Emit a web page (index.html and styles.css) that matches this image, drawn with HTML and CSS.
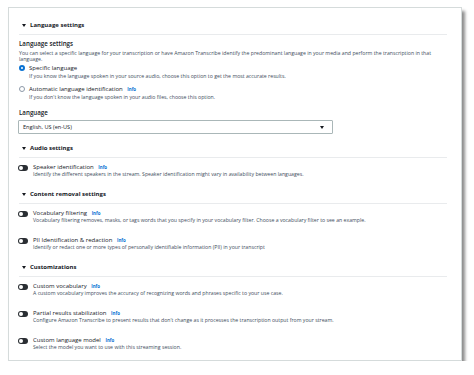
FILE: index.html
```html
<!DOCTYPE html>
<html lang="en">
<head>
    <meta charset="UTF-8">
    <meta name="viewport" content="width=device-width, initial-scale=1.0">
    <title>Streaming settings</title>
    <link rel="stylesheet" href="styles.css">
</head>
<body>
    <div class="panel">
        <div class="section-header top"><span class="caret"></span>Language settings</div>

        <div class="field-label">Language settings</div>
        <p class="field-desc">You can select a specific language for your transcription or have Amazon Transcribe identify the predominant language in your media and perform the transcription in that language.</p>

        <div class="radio-row first">
            <span class="radio checked"></span>
            <div>
                <div class="option-label">Specific language</div>
                <div class="option-desc">If you know the language spoken in your source audio, choose this option to get the most accurate results.</div>
            </div>
        </div>
        <div class="radio-row">
            <span class="radio"></span>
            <div>
                <div class="option-label">Automatic language identification <a class="info">Info</a></div>
                <div class="option-desc">If you don't know the language spoken in your audio files, choose this option.</div>
            </div>
        </div>

        <div class="field-label lang-label">Language</div>
        <div class="select">
            <span>English, US (en-US)</span>
            <span class="select-arrow"></span>
        </div>

        <div class="section-header audio"><span class="caret"></span>Audio settings</div>
        <div class="toggle-row">
            <span class="toggle"></span>
            <div>
                <div class="toggle-label">Speaker identification <a class="info">Info</a></div>
                <div class="toggle-desc">Identify the different speakers in the stream. Speaker identification might vary in availability between languages.</div>
            </div>
        </div>

        <div class="section-header"><span class="caret"></span>Content removal settings</div>
        <div class="toggle-row">
            <span class="toggle"></span>
            <div>
                <div class="toggle-label">Vocabulary filtering <a class="info">Info</a></div>
                <div class="toggle-desc">Vocabulary filtering removes, masks, or tags words that you specify in your vocabulary filter. Choose a vocabulary filter to see an example.</div>
            </div>
        </div>
        <div class="toggle-row">
            <span class="toggle"></span>
            <div>
                <div class="toggle-label">PII Identification &amp; redaction <a class="info">Info</a></div>
                <div class="toggle-desc">Identify or redact one or more types of personally identifiable information (PII) in your transcript</div>
            </div>
        </div>

        <div class="section-header"><span class="caret"></span>Customizations</div>
        <div class="toggle-row">
            <span class="toggle"></span>
            <div>
                <div class="toggle-label">Custom vocabulary <a class="info">Info</a></div>
                <div class="toggle-desc">A custom vocabulary improves the accuracy of recognizing words and phrases specific to your use case.</div>
            </div>
        </div>
        <div class="toggle-row">
            <span class="toggle"></span>
            <div>
                <div class="toggle-label">Partial results stabilization <a class="info">Info</a></div>
                <div class="toggle-desc">Configure Amazon Transcribe to present results that don't change as it processes the transcription output from your stream.</div>
            </div>
        </div>
        <div class="toggle-row">
            <span class="toggle"></span>
            <div>
                <div class="toggle-label">Custom language model <a class="info">Info</a></div>
                <div class="toggle-desc">Select the model you want to use with this streaming session.</div>
            </div>
        </div>
    </div>
</body>
</html>
```

FILE: styles.css
```css
* {
    margin: 0;
    padding: 0;
    box-sizing: border-box;
}
body {
    font-family: "Open Sans", Arial, sans-serif;
    background-color: #fff;
    color: #16191f;
}
.panel {
    width: 454px;
    height: 354px;
    margin: 7px 0 0 8px;
    padding: 0 14px 0 10px;
    border: 1px solid #d5dbdb;
    box-shadow: 3px 4px 3px rgba(0, 0, 0, 0.45);
}
.section-header {
    display: flex;
    align-items: center;
    height: 26px;
    padding: 12px 0 5px 3px;
    line-height: 8px;
    font-size: 6px;
    font-weight: 700;
    border-bottom: 1px solid #e9ebed;
}
.section-header.top {
    height: 27px;
    padding-top: 13px;
}
.section-header.audio {
    height: 24px;
    padding-top: 10px;
}
.caret {
    width: 0;
    height: 0;
    margin-right: 4px;
    border-left: 2px solid transparent;
    border-right: 2px solid transparent;
    border-top: 3px solid #16191f;
}
.field-label {
    margin-top: 5px;
    height: 8px;
    line-height: 8px;
    font-size: 6.2px;
    font-weight: 600;
}
.field-desc {
    margin-top: 2px;
    width: 420px;
    line-height: 6px;
    font-size: 5.2px;
    color: #414d5c;
}
.radio-row {
    display: flex;
    align-items: flex-start;
    margin-top: 6px;
}
.radio-row.first {
    margin-top: 2px;
}
.radio {
    flex: none;
    width: 6px;
    height: 6px;
    margin: 1px 4px 0 0;
    border: 1px solid #8d99a8;
    border-radius: 50%;
    background-color: #fff;
}
.radio.checked {
    border: 2px solid #0972d3;
}
.option-label {
    height: 8px;
    line-height: 8px;
    font-size: 6px;
    font-weight: 500;
}
.option-desc {
    margin-top: 1px;
    height: 6px;
    line-height: 6px;
    font-size: 5.2px;
    color: #414d5c;
}
.lang-label {
    margin-top: 9px;
}
.select {
    display: flex;
    align-items: center;
    justify-content: space-between;
    width: 315px;
    height: 14px;
    margin: 3px 0 0 -1px;
    padding: 0 8px 0 4px;
    border: 1px solid #aab7b8;
    border-radius: 1px;
    font-size: 5.6px;
}
.select-arrow {
    width: 0;
    height: 0;
    border-left: 2.5px solid transparent;
    border-right: 2.5px solid transparent;
    border-top: 3.5px solid #16191f;
}
.toggle-row {
    display: flex;
    align-items: flex-start;
    margin-top: 13px;
}
.section-header + .toggle-row {
    margin-top: 6px;
}
.toggle {
    flex: none;
    position: relative;
    width: 10px;
    height: 6px;
    margin: 0.5px 5px 0 -1px;
    border-radius: 3px;
    background-color: #2a2e33;
}
.toggle::after {
    content: "";
    position: absolute;
    left: 1px;
    top: 1px;
    width: 4px;
    height: 4px;
    border-radius: 50%;
    background-color: #fff;
}
.toggle-label {
    height: 7px;
    line-height: 7px;
    font-size: 6px;
    font-weight: 500;
}
.toggle-desc {
    height: 7px;
    line-height: 7px;
    font-size: 5.2px;
    color: #414d5c;
}
.info {
    margin-left: 3px;
    font-size: 4.4px;
    font-weight: 700;
    color: #0972d3;
}
```
